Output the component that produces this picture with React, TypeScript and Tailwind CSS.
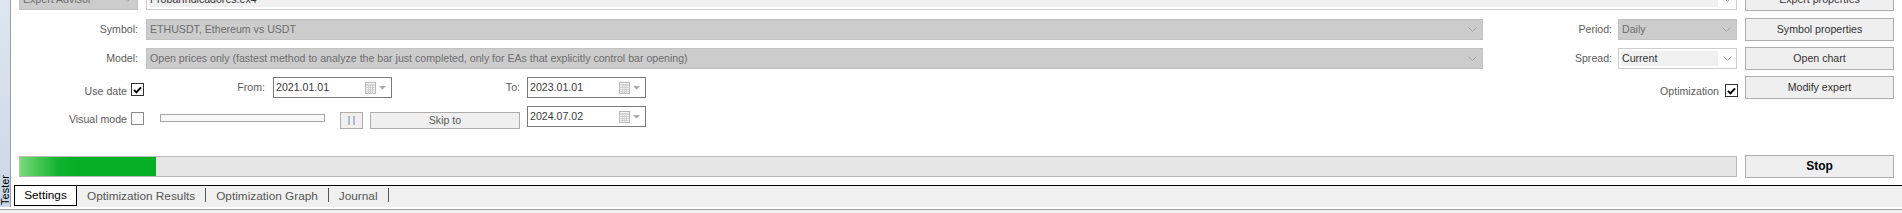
import React from 'react';

function Chevron() {
  return (
    <svg width="9" height="5" viewBox="0 0 9 5" className="shrink-0">
      <path d="M0.5 0.5 L4.5 4.5 L8.5 0.5" fill="none" stroke="#a3a3a3" strokeWidth="1" />
    </svg>
  );
}

function CalendarIcon() {
  return (
    <svg width="11" height="12" viewBox="0 0 11 12" className="shrink-0">
      <rect x="0.5" y="0.5" width="10" height="11" fill="#f6f6f6" stroke="#b9b9b9" />
      <line x1="0.5" y1="3" x2="10.5" y2="3" stroke="#b9b9b9" />
      <line x1="3.5" y1="3" x2="3.5" y2="11.5" stroke="#d2d2d2" />
      <line x1="5.5" y1="3" x2="5.5" y2="11.5" stroke="#d2d2d2" />
      <line x1="7.5" y1="3" x2="7.5" y2="11.5" stroke="#d2d2d2" />
      <line x1="0.5" y1="5.5" x2="10.5" y2="5.5" stroke="#d2d2d2" />
      <line x1="0.5" y1="7.5" x2="10.5" y2="7.5" stroke="#d2d2d2" />
      <line x1="0.5" y1="9.5" x2="10.5" y2="9.5" stroke="#d2d2d2" />
    </svg>
  );
}

function GrayCombo({ text, className = '' }: { text: string; className?: string }) {
  return (
    <div
      className={`flex h-[21px] items-center justify-between border border-[#c2c2c2] bg-[#cccccc] pl-[3px] pr-[5px] text-[#6d6d6d] ${className}`}
    >
      <span className="truncate whitespace-nowrap">{text}</span>
      <Chevron />
    </div>
  );
}

function EditCombo({ text, className = '' }: { text: string; className?: string }) {
  return (
    <div className={`flex h-[21px] items-stretch border border-[#cdcdcd] bg-white py-[2px] pl-[2px] ${className}`}>
      <div className="flex flex-1 items-center bg-[#f0f0f0] pl-[1px] text-[#333]">{text}</div>
      <div className="flex w-[18px] items-center justify-center">
        <Chevron />
      </div>
    </div>
  );
}

function DateField({ value, className = '' }: { value: string; className?: string }) {
  return (
    <div
      className={`flex h-[21px] w-[119px] items-center border border-[#7a7a7a] bg-white pl-[2px] pr-[5px] text-[#3c3c3c] ${className}`}
    >
      <span className="flex-1">{value}</span>
      <CalendarIcon />
      <svg width="7" height="4" viewBox="0 0 7 4" className="ml-[3px] shrink-0">
        <path d="M0 0 H7 L3.5 3.5 Z" fill="#a8a8a8" />
      </svg>
    </div>
  );
}

function Btn({ children, className = '' }: { children: React.ReactNode; className?: string }) {
  return (
    <div
      className={`flex h-[23px] w-[149px] shrink-0 items-center justify-center border border-[#adadad] bg-[#efefef] ${className}`}
    >
      {children}
    </div>
  );
}

function Check({ checked, border = 'border-[#333333]', className = '' }: { checked?: boolean; border?: string; className?: string }) {
  return (
    <div className={`flex h-[13px] w-[13px] shrink-0 items-center justify-center border bg-white ${border} ${className}`}>
      {checked && (
        <svg width="9" height="8" viewBox="0 0 9 8">
          <path d="M1 3.8 L3.4 6.3 L8 1.3" fill="none" stroke="#000" strokeWidth="1.9" />
        </svg>
      )}
    </div>
  );
}

const tabs = ['Optimization Results', 'Optimization Graph', 'Journal'];

export default function App() {
  return (
    <div className="h-[213px] w-[1902px] overflow-hidden bg-[#f0f0f0] font-['Liberation_Sans',Arial,sans-serif] text-[10.6px] leading-[13px]">
      <div className="flex h-[207px]">
        <div className="flex w-[11px] flex-col justify-end border-r border-[#a0a0a0] bg-[linear-gradient(to_bottom,#dde6f0,#cad7e5)] pb-[2px]">
          <span className="rotate-180 text-[11px] leading-[10px] text-black [writing-mode:vertical-rl]">Tester</span>
        </div>

        <div className="flex flex-1 flex-col overflow-hidden bg-white">
          {/* expert row, cut at top */}
          <div className="-mt-[12px] flex h-[23px] shrink-0 items-center px-[8px]">
            <GrayCombo text="Expert Advisor" className="w-[119px]" />
            <EditCombo text="ProbarIndicadores.ex4" className="ml-[8px] flex-1" />
            <Btn className="ml-[8px] text-[#333]">Expert properties</Btn>
          </div>

          <div className="mt-[7px] flex h-[23px] shrink-0 items-center pr-[8px]">
            <div className="w-[135px] pr-[8px] text-right text-[#5b5b5b]">Symbol:</div>
            <GrayCombo text="ETHUSDT, Ethereum vs USDT" className="w-[1337px]" />
            <div className="w-[135px] pr-[6px] text-right text-[#5b5b5b]">Period:</div>
            <GrayCombo text="Daily" className="w-[119px]" />
            <Btn className="ml-[8px] text-[#333]">Symbol properties</Btn>
          </div>

          <div className="mt-[6px] flex h-[23px] shrink-0 items-center pr-[8px]">
            <div className="w-[135px] pr-[8px] text-right text-[#5b5b5b]">Model:</div>
            <GrayCombo
              text="Open prices only (fastest method to analyze the bar just completed, only for EAs that explicitly control bar opening)"
              className="w-[1337px]"
            />
            <div className="w-[135px] pr-[6px] text-right text-[#5b5b5b]">Spread:</div>
            <EditCombo text="Current" className="w-[119px]" />
            <Btn className="ml-[8px] text-[#333]">Open chart</Btn>
          </div>

          <div className="mt-[6px] flex h-[23px] shrink-0 items-start pr-[8px]">
            <div className="mt-[9px] w-[116px] text-right text-[#5b5b5b]">Use date</div>
            <Check checked className="ml-[4px] mt-[7px]" />
            <div className="mt-[5px] w-[121px] text-right text-[#5b5b5b]">From:</div>
            <DateField value="2021.01.01" className="ml-[8px] mt-[1px]" />
            <div className="mt-[5px] w-[128px] text-right text-[#5b5b5b]">To:</div>
            <DateField value="2023.01.01" className="ml-[7px] mt-[1px]" />
            <div className="mt-[9px] flex-1 pr-[6px] text-right text-[#5b5b5b]">Optimization</div>
            <Check checked className="mt-[8px]" />
            <Btn className="ml-[7px] text-[#333]">Modify expert</Btn>
          </div>

          <div className="mt-[6px] flex h-[24px] shrink-0 items-start">
            <div className="mt-[8px] w-[116px] text-right text-[#5b5b5b]">Visual mode</div>
            <Check border="border-[#8a8a8a]" className="ml-[4px] mt-[7px]" />
            <div className="ml-[16px] mt-[9px] h-[8px] w-[165px] border border-[#a6a6a6] bg-[#f7f7f7]" />
            <div className="ml-[15px] mt-[7px] flex h-[17px] w-[23px] items-center justify-center gap-[3px] border border-[#adadad] bg-[#efefef]">
              <span className="h-[9px] w-[2px] bg-[#a9bccf]" />
              <span className="h-[9px] w-[2px] bg-[#a9bccf]" />
            </div>
            <div className="ml-[7px] mt-[7px] flex h-[17px] w-[150px] items-center justify-center border border-[#adadad] bg-[#efefef] text-[#5a5a5a]">
              Skip to
            </div>
            <DateField value="2024.07.02" className="ml-[7px] mt-[1px]" />
          </div>

          <div className="mt-[26px] flex h-[23px] shrink-0 items-center px-[8px]">
            <div className="h-[21px] flex-1 border border-[#bcbcbc] bg-[#e6e6e6]">
              <div className="h-full w-[136px] bg-[linear-gradient(to_right,#78da78_0%,#4cc85a_12%,#12b32e_28%,#06b025_40%,#06b025_100%)]" />
            </div>
            <Btn className="ml-[8px] text-[12px] font-bold text-black">Stop</Btn>
          </div>

          <div className="mt-[7px] flex h-[22px] shrink-0 pl-[3px]">
            <div className="flex flex-1 border-t border-black bg-[#f0f0f0] text-[11.8px]">
              <div className="-mt-px flex h-[21px] w-[63px] items-center justify-center border border-black bg-white text-black">
                Settings
              </div>
              {tabs.map((t) => (
                <React.Fragment key={t}>
                  <div className="flex items-center px-[10px] text-[#555]">{t}</div>
                  <div className="mt-[2px] h-[14px] w-px self-start bg-[#555]" />
                </React.Fragment>
              ))}
            </div>
          </div>
        </div>
      </div>
      <div className="h-[2px] bg-white" />
      <div className="h-px bg-[#a0a0a0]" />
    </div>
  );
}
